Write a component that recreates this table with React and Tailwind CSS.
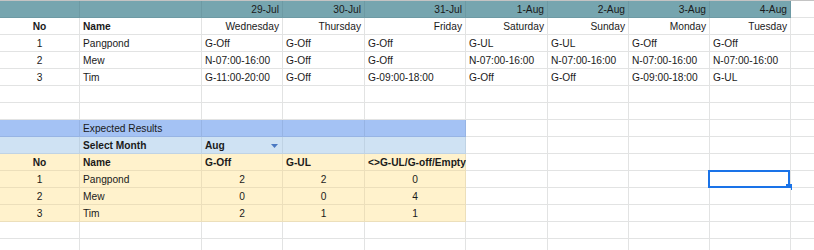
import React from 'react';

const W = ['w-[80px]', 'w-[122px]', 'w-[81px]', 'w-[82px]', 'w-[101px]', 'w-[82px]', 'w-[81px]', 'w-[81px]', 'w-[81px]'];

const ALIGN = { l: 'justify-start pl-[3px]', c: 'justify-center', r: 'justify-end pr-[3px]' };

const Cell = ({ i, t, a = 'l', b, bg = 'bg-white', line = 'border-[#e2e3e3]', children }) => (
    <div
        className={`${W[i]} ${bg} ${line} ${ALIGN[a]} ${b ? 'font-bold' : ''} relative shrink-0 h-[17px] border-r border-b flex items-end pb-[1px] leading-[12px] whitespace-nowrap overflow-visible`}
    >
        {t}
        {children}
    </div>
);

const Tail = () => <div className="flex-1 h-[17px] border-b border-[#e2e3e3] bg-white" />;

const days = [
    ['29-Jul', 'Wednesday'],
    ['30-Jul', 'Thursday'],
    ['31-Jul', 'Friday'],
    ['1-Aug', 'Saturday'],
    ['2-Aug', 'Sunday'],
    ['3-Aug', 'Monday'],
    ['4-Aug', 'Tuesday'],
];

const schedule = [
    ['1', 'Pangpond', ['G-Off', 'G-Off', 'G-Off', 'G-UL', 'G-UL', 'G-Off', 'G-Off']],
    ['2', 'Mew', ['N-07:00-16:00', 'G-Off', 'G-Off', 'N-07:00-16:00', 'N-07:00-16:00', 'N-07:00-16:00', 'N-07:00-16:00']],
    ['3', 'Tim', ['G-11:00-20:00', 'G-Off', 'G-09:00-18:00', 'G-Off', 'G-Off', 'G-09:00-18:00', 'G-UL']],
];

const results = [
    ['1', 'Pangpond', '2', '2', '0'],
    ['2', 'Mew', '0', '0', '4'],
    ['3', 'Tim', '2', '1', '1'],
];

const Blank = ({ from = 0 }) =>
    W.slice(from).map((_, k) => <Cell key={k} i={k + from} />);

const App = () => {
    const teal = { bg: 'bg-[#76a5af]', line: 'border-[#6d9aa4]' };
    const blue = { bg: 'bg-[#a4c2f4]', line: 'border-[#97b4e4]' };
    const pale = { bg: 'bg-[#cfe2f3]', line: 'border-[#c0d3e4]' };
    const yel = { bg: 'bg-[#fff2cc]', line: 'border-[#ecdfbb]' };

    return (
        <div className="w-[814px] h-[250px] overflow-hidden bg-white text-[10.2px] text-[#1a1a1a] border-t border-[#c4c4c4]" style={{ fontFamily: '"Liberation Sans", Arial, sans-serif' }}>
            {/* date header */}
            <div className="flex">
                <Cell i={0} {...teal} />
                <Cell i={1} {...teal} />
                {days.map((d, k) => (
                    <Cell key={k} i={k + 2} t={d[0]} a="r" {...teal} />
                ))}
                <Tail />
            </div>
            <div className="flex">
                <Cell i={0} t="No" a="c" b />
                <Cell i={1} t="Name" b />
                {days.map((d, k) => (
                    <Cell key={k} i={k + 2} t={d[1]} a="r" />
                ))}
                <Tail />
            </div>
            {schedule.map((r) => (
                <div className="flex" key={r[0]}>
                    <Cell i={0} t={r[0]} a="c" />
                    <Cell i={1} t={r[1]} />
                    {r[2].map((s, k) => (
                        <Cell key={k} i={k + 2} t={s} />
                    ))}
                    <Tail />
                </div>
            ))}
            <div className="flex"><Blank /><Tail /></div>
            <div className="flex"><Blank /><Tail /></div>

            {/* expected results */}
            <div className="flex">
                <Cell i={0} {...blue} />
                <Cell i={1} t="Expected Results" {...blue} />
                <Cell i={2} {...blue} />
                <Cell i={3} {...blue} />
                <Cell i={4} {...blue} />
                <Blank from={5} />
                <Tail />
            </div>
            <div className="flex">
                <Cell i={0} {...pale} />
                <Cell i={1} t="Select Month" b {...pale} />
                <Cell i={2} t="Aug" b {...pale}>
                    <svg className="absolute right-[4px] top-[7px]" width="7" height="4" viewBox="0 0 7 4">
                        <path d="M0 0h7L3.5 4z" fill="#4a78c2" />
                    </svg>
                </Cell>
                <Cell i={3} {...pale} />
                <Cell i={4} {...pale} />
                <Blank from={5} />
                <Tail />
            </div>
            <div className="flex">
                <Cell i={0} t="No" a="c" b {...yel} />
                <Cell i={1} t="Name" b {...yel} />
                <Cell i={2} t="G-Off" b {...yel} />
                <Cell i={3} t="G-UL" b {...yel} />
                <Cell i={4} t="<>G-UL/G-off/Empty" b {...yel} />
                <Blank from={5} />
                <Tail />
            </div>
            {results.map((r, n) => (
                <div className="flex" key={r[0]}>
                    <Cell i={0} t={r[0]} a="c" {...yel} />
                    <Cell i={1} t={r[1]} {...yel} />
                    <Cell i={2} t={r[2]} a="c" {...yel} />
                    <Cell i={3} t={r[3]} a="c" {...yel} />
                    <Cell i={4} t={r[4]} a="c" {...yel} />
                    <Cell i={5} />
                    <Cell i={6} />
                    <Cell i={7} />
                    <Cell i={8}>
                        {n === 0 && (
                            <div className="absolute -left-[2px] -top-[1px] w-[82px] h-[18px] border-2 border-[#1a73e8]">
                                <div className="absolute -right-[4px] -bottom-[4px] w-[6px] h-[6px] bg-[#1a73e8]" />
                            </div>
                        )}
                    </Cell>
                    <Tail />
                </div>
            ))}
            <div className="flex"><Blank /><Tail /></div>
            <div className="flex"><Blank /><Tail /></div>
        </div>
    );
};

export default App;
